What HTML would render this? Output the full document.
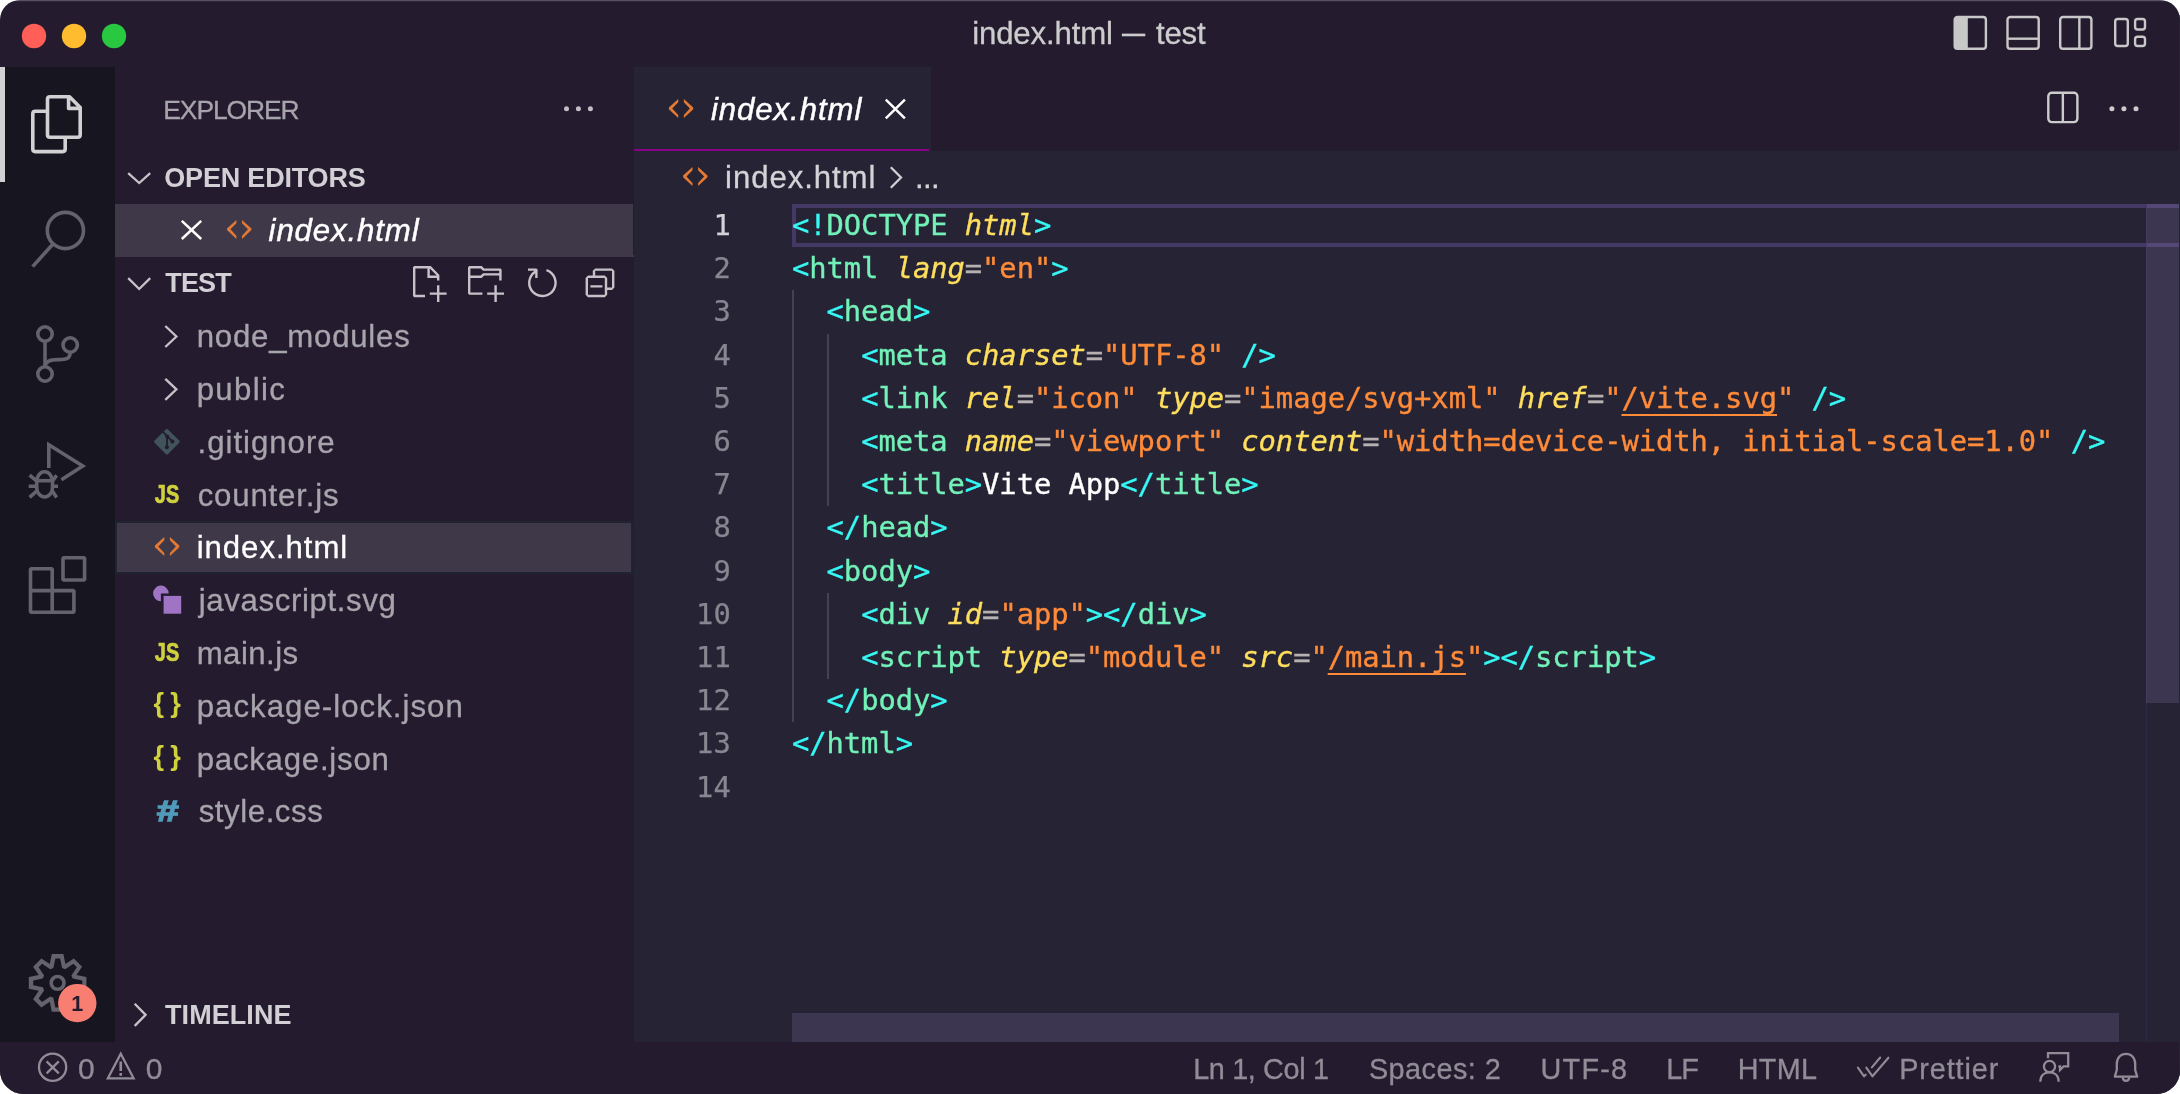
<!DOCTYPE html>
<html lang="en"><head><meta charset="utf-8"><title>index.html — test</title>
<style>
html,body{margin:0;padding:0;background:#ffffff;}
body{width:2180px;height:1094px;overflow:hidden;position:relative;}
.win{position:absolute;left:0;top:0;width:2180px;height:1094px;border-radius:20px 20px 23.5px 23.5px;overflow:hidden;background:#241b2f;}
.win div{position:absolute;}
.t{white-space:pre;-webkit-text-stroke:0.3px;}
.txt{position:absolute;left:0;top:0;width:2180px;height:1094px;will-change:transform;}
.cl{left:792.0px;font:400 28.8px "DejaVu Sans Mono", "Liberation Mono", monospace;line-height:43.2px;height:43.2px;white-space:pre;letter-spacing:-0.059px;-webkit-text-stroke:0.35px;}
.ln{left:641.3px;width:89.5px;text-align:right;font:400 28.8px "DejaVu Sans Mono", "Liberation Mono", monospace;line-height:43.2px;height:43.2px;-webkit-text-stroke:0.25px;}
.ov{position:absolute;left:0;top:0;}
</style></head>
<body><div class="win">
<div style="left:0px;top:67px;width:115px;height:975px;background:#171520;"></div>
<div style="left:0px;top:67px;width:5px;height:115px;background:#d1d0d2;"></div>
<div style="left:634px;top:67px;width:1546px;height:84px;background:#241b2f;"></div>
<div style="left:634px;top:67px;width:297px;height:84px;background:#262335;"></div>
<div style="left:634px;top:148.6px;width:295px;height:2.4px;background:#880088;"></div>
<div style="left:634px;top:151px;width:1546px;height:891px;background:#262335;"></div>
<div style="left:115px;top:204px;width:518px;height:52.8px;background:#3f3849;"></div>
<div style="left:115px;top:255px;width:518.6px;height:2px;background:#403848;"></div>
<div style="left:115px;top:521px;width:518px;height:53px;background:#202432;"></div>
<div style="left:117px;top:523px;width:514px;height:49px;background:#3f3849;"></div>
<div style="left:792px;top:204px;width:1388px;height:43.2px;background:transparent;box-sizing:border-box;border:4.4px solid #443964;border-right:none;"></div>
<div style="left:792px;top:290.4px;width:2.2px;height:432.0px;background:#444251;"></div>
<div style="left:826.6px;top:333.6px;width:2.2px;height:172.8px;background:#444251;"></div>
<div style="left:826.6px;top:592.8px;width:2.2px;height:86.4px;background:#444251;"></div>
<div style="left:2146px;top:204px;width:1px;height:838px;background:#302848;"></div>
<div style="left:2146px;top:204px;width:34px;height:499px;background:rgba(157,139,202,0.188);"></div>
<div style="left:792px;top:1013px;width:1326.6px;height:28.8px;background:rgba(157,139,202,0.188);"></div>
<div style="left:0px;top:1042px;width:2180px;height:52px;background:#241b2f;"></div>
<div style="left:0px;top:0px;width:2180px;height:1px;background:rgba(255,255,255,0.24);"></div>
<div style="left:0px;top:1px;width:2180px;height:1px;background:rgba(255,255,255,0.05);"></div>
<div style="left:2179px;top:0px;width:1px;height:1094px;background:#262335;"></div>
<div class="txt">
<div class="cl" style="top:204.00px"><span style="color:#36f9f6;">&lt;!</span><span style="color:#72f1b8;">DOCTYPE</span><span style="color:#ffffff;"> </span><span style="color:#fede5d;font-style:italic;">html</span><span style="color:#36f9f6;">&gt;</span></div>
<div class="ln" style="top:204.00px;color:#d3d2d6">1</div>
<div class="cl" style="top:247.20px"><span style="color:#36f9f6;">&lt;</span><span style="color:#72f1b8;">html</span><span style="color:#ffffff;"> </span><span style="color:#fede5d;font-style:italic;">lang</span><span style="color:#b6b1b1;">=</span><span style="color:#ff8b39;">"en"</span><span style="color:#36f9f6;">&gt;</span></div>
<div class="ln" style="top:247.20px;color:#888690">2</div>
<div class="cl" style="top:290.40px"><span style="color:#ffffff;">  </span><span style="color:#36f9f6;">&lt;</span><span style="color:#72f1b8;">head</span><span style="color:#36f9f6;">&gt;</span></div>
<div class="ln" style="top:290.40px;color:#888690">3</div>
<div class="cl" style="top:333.60px"><span style="color:#ffffff;">    </span><span style="color:#36f9f6;">&lt;</span><span style="color:#72f1b8;">meta</span><span style="color:#ffffff;"> </span><span style="color:#fede5d;font-style:italic;">charset</span><span style="color:#b6b1b1;">=</span><span style="color:#ff8b39;">"UTF-8"</span><span style="color:#ffffff;"> </span><span style="color:#36f9f6;">/&gt;</span></div>
<div class="ln" style="top:333.60px;color:#888690">4</div>
<div class="cl" style="top:376.80px"><span style="color:#ffffff;">    </span><span style="color:#36f9f6;">&lt;</span><span style="color:#72f1b8;">link</span><span style="color:#ffffff;"> </span><span style="color:#fede5d;font-style:italic;">rel</span><span style="color:#b6b1b1;">=</span><span style="color:#ff8b39;">"icon"</span><span style="color:#ffffff;"> </span><span style="color:#fede5d;font-style:italic;">type</span><span style="color:#b6b1b1;">=</span><span style="color:#ff8b39;">"image/svg+xml"</span><span style="color:#ffffff;"> </span><span style="color:#fede5d;font-style:italic;">href</span><span style="color:#b6b1b1;">=</span><span style="color:#ff8b39;">"</span><span style="color:#ff8b39;text-decoration:underline;text-underline-offset:6.4px;text-decoration-thickness:2px;text-decoration-skip-ink:none;">/vite.svg</span><span style="color:#ff8b39;">"</span><span style="color:#ffffff;"> </span><span style="color:#36f9f6;">/&gt;</span></div>
<div class="ln" style="top:376.80px;color:#888690">5</div>
<div class="cl" style="top:420.00px"><span style="color:#ffffff;">    </span><span style="color:#36f9f6;">&lt;</span><span style="color:#72f1b8;">meta</span><span style="color:#ffffff;"> </span><span style="color:#fede5d;font-style:italic;">name</span><span style="color:#b6b1b1;">=</span><span style="color:#ff8b39;">"viewport"</span><span style="color:#ffffff;"> </span><span style="color:#fede5d;font-style:italic;">content</span><span style="color:#b6b1b1;">=</span><span style="color:#ff8b39;">"width=device-width, initial-scale=1.0"</span><span style="color:#ffffff;"> </span><span style="color:#36f9f6;">/&gt;</span></div>
<div class="ln" style="top:420.00px;color:#888690">6</div>
<div class="cl" style="top:463.20px"><span style="color:#ffffff;">    </span><span style="color:#36f9f6;">&lt;</span><span style="color:#72f1b8;">title</span><span style="color:#36f9f6;">&gt;</span><span style="color:#ffffff;">Vite App</span><span style="color:#36f9f6;">&lt;/</span><span style="color:#72f1b8;">title</span><span style="color:#36f9f6;">&gt;</span></div>
<div class="ln" style="top:463.20px;color:#888690">7</div>
<div class="cl" style="top:506.40px"><span style="color:#ffffff;">  </span><span style="color:#36f9f6;">&lt;/</span><span style="color:#72f1b8;">head</span><span style="color:#36f9f6;">&gt;</span></div>
<div class="ln" style="top:506.40px;color:#888690">8</div>
<div class="cl" style="top:549.60px"><span style="color:#ffffff;">  </span><span style="color:#36f9f6;">&lt;</span><span style="color:#72f1b8;">body</span><span style="color:#36f9f6;">&gt;</span></div>
<div class="ln" style="top:549.60px;color:#888690">9</div>
<div class="cl" style="top:592.80px"><span style="color:#ffffff;">    </span><span style="color:#36f9f6;">&lt;</span><span style="color:#72f1b8;">div</span><span style="color:#ffffff;"> </span><span style="color:#fede5d;font-style:italic;">id</span><span style="color:#b6b1b1;">=</span><span style="color:#ff8b39;">"app"</span><span style="color:#36f9f6;">&gt;&lt;/</span><span style="color:#72f1b8;">div</span><span style="color:#36f9f6;">&gt;</span></div>
<div class="ln" style="top:592.80px;color:#888690">10</div>
<div class="cl" style="top:636.00px"><span style="color:#ffffff;">    </span><span style="color:#36f9f6;">&lt;</span><span style="color:#72f1b8;">script</span><span style="color:#ffffff;"> </span><span style="color:#fede5d;font-style:italic;">type</span><span style="color:#b6b1b1;">=</span><span style="color:#ff8b39;">"module"</span><span style="color:#ffffff;"> </span><span style="color:#fede5d;font-style:italic;">src</span><span style="color:#b6b1b1;">=</span><span style="color:#ff8b39;">"</span><span style="color:#ff8b39;text-decoration:underline;text-underline-offset:6.4px;text-decoration-thickness:2px;text-decoration-skip-ink:none;">/main.js</span><span style="color:#ff8b39;">"</span><span style="color:#36f9f6;">&gt;&lt;/</span><span style="color:#72f1b8;">script</span><span style="color:#36f9f6;">&gt;</span></div>
<div class="ln" style="top:636.00px;color:#888690">11</div>
<div class="cl" style="top:679.20px"><span style="color:#ffffff;">  </span><span style="color:#36f9f6;">&lt;/</span><span style="color:#72f1b8;">body</span><span style="color:#36f9f6;">&gt;</span></div>
<div class="ln" style="top:679.20px;color:#888690">12</div>
<div class="cl" style="top:722.40px"><span style="color:#36f9f6;">&lt;/</span><span style="color:#72f1b8;">html</span><span style="color:#36f9f6;">&gt;</span></div>
<div class="ln" style="top:722.40px;color:#888690">13</div>
<div class="cl" style="top:765.60px"></div>
<div class="ln" style="top:765.60px;color:#888690">14</div>
<div class="t" style='left:163.30px;top:91px;font:400 26.4px "Liberation Sans", sans-serif;line-height:38px;color:#a7a4ac;letter-spacing:-1.053px;'>EXPLORER</div>
<div class="t" style='left:164.30px;top:159px;font:700 27.0px "Liberation Sans", sans-serif;line-height:38px;color:#d2d0d5;letter-spacing:-0.194px;-webkit-text-stroke:0;'>OPEN EDITORS</div>
<div class="t" style='left:268.60px;top:209px;font:italic 400 31.2px "Liberation Sans", sans-serif;line-height:43px;color:#ffffff;letter-spacing:0.876px;-webkit-text-stroke:0.45px;'>index.html</div>
<div class="t" style='left:165.30px;top:264px;font:700 27.0px "Liberation Sans", sans-serif;line-height:38px;color:#d2d0d5;letter-spacing:-0.870px;-webkit-text-stroke:0;'>TEST</div>
<div class="t" style='left:196.70px;top:315px;font:400 31.2px "Liberation Sans", sans-serif;line-height:43px;color:#a7a4ac;letter-spacing:0.772px;'>node_modules</div>
<div class="t" style='left:196.70px;top:368px;font:400 31.2px "Liberation Sans", sans-serif;line-height:43px;color:#a7a4ac;letter-spacing:1.341px;'>public</div>
<div class="t" style='left:197.50px;top:421px;font:400 31.2px "Liberation Sans", sans-serif;line-height:43px;color:#a7a4ac;letter-spacing:0.983px;'>.gitignore</div>
<div class="t" style='left:197.70px;top:474px;font:400 31.2px "Liberation Sans", sans-serif;line-height:43px;color:#a7a4ac;letter-spacing:0.811px;'>counter.js</div>
<div class="t" style='left:196.70px;top:526px;font:400 31.2px "Liberation Sans", sans-serif;line-height:43px;color:#ffffff;letter-spacing:0.932px;'>index.html</div>
<div class="t" style='left:198.80px;top:579px;font:400 31.2px "Liberation Sans", sans-serif;line-height:43px;color:#a7a4ac;letter-spacing:0.617px;'>javascript.svg</div>
<div class="t" style='left:196.70px;top:632px;font:400 31.2px "Liberation Sans", sans-serif;line-height:43px;color:#a7a4ac;letter-spacing:0.435px;'>main.js</div>
<div class="t" style='left:196.70px;top:685px;font:400 31.2px "Liberation Sans", sans-serif;line-height:43px;color:#a7a4ac;letter-spacing:1.025px;'>package-lock.json</div>
<div class="t" style='left:196.70px;top:738px;font:400 31.2px "Liberation Sans", sans-serif;line-height:43px;color:#a7a4ac;letter-spacing:0.760px;'>package.json</div>
<div class="t" style='left:198.70px;top:790px;font:400 31.2px "Liberation Sans", sans-serif;line-height:43px;color:#a7a4ac;letter-spacing:0.565px;'>style.css</div>
<div class="t" style='left:165.00px;top:996px;font:700 27.0px "Liberation Sans", sans-serif;line-height:38px;color:#d2d0d5;letter-spacing:0.073px;-webkit-text-stroke:0;'>TIMELINE</div>
<div class="t" style='left:972.20px;top:12px;font:400 31.2px "Liberation Sans", sans-serif;line-height:43px;color:#cccccc;letter-spacing:-0.157px;'>index.html</div>
<div class="t" style='left:1122.00px;top:11px;font:400 31.2px "Liberation Sans", sans-serif;line-height:43px;color:#cccccc;transform:scaleX(0.74);transform-origin:0 50%;'>—</div>
<div class="t" style='left:1155.90px;top:12px;font:400 31.2px "Liberation Sans", sans-serif;line-height:43px;color:#cccccc;letter-spacing:-0.168px;'>test</div>
<div class="t" style='left:710.90px;top:88px;font:italic 400 31.2px "Liberation Sans", sans-serif;line-height:43px;color:#ffffff;letter-spacing:0.921px;-webkit-text-stroke:0.45px;'>index.html</div>
<div class="t" style='left:725.10px;top:156px;font:400 31.2px "Liberation Sans", sans-serif;line-height:43px;color:#d4d3d7;letter-spacing:0.910px;'>index.html</div>
<div class="t" style='left:915.10px;top:156px;font:400 31.2px "Liberation Sans", sans-serif;line-height:43px;color:#d4d3d7;letter-spacing:-0.715px;'>...</div>
<div class="t" style='left:77.90px;top:1048px;font:400 30.0px "Liberation Sans", sans-serif;line-height:41px;color:#918d97;'>0</div>
<div class="t" style='left:145.80px;top:1048px;font:400 30.0px "Liberation Sans", sans-serif;line-height:41px;color:#918d97;'>0</div>
<div class="t" style='left:1193.20px;top:1049px;font:400 28.8px "Liberation Sans", sans-serif;line-height:40px;color:#918d97;letter-spacing:-0.356px;'>Ln 1, Col 1</div>
<div class="t" style='left:1368.90px;top:1049px;font:400 28.8px "Liberation Sans", sans-serif;line-height:40px;color:#918d97;letter-spacing:0.481px;'>Spaces: 2</div>
<div class="t" style='left:1540.60px;top:1049px;font:400 28.8px "Liberation Sans", sans-serif;line-height:40px;color:#918d97;letter-spacing:1.233px;'>UTF-8</div>
<div class="t" style='left:1666.30px;top:1049px;font:400 28.8px "Liberation Sans", sans-serif;line-height:40px;color:#918d97;letter-spacing:-1.115px;'>LF</div>
<div class="t" style='left:1737.70px;top:1049px;font:400 28.8px "Liberation Sans", sans-serif;line-height:40px;color:#918d97;letter-spacing:0.342px;'>HTML</div>
<div class="t" style='left:1899.20px;top:1049px;font:400 28.8px "Liberation Sans", sans-serif;line-height:40px;color:#918d97;letter-spacing:0.896px;'>Prettier</div>
</div>
<svg class="ov" width="2180" height="1094" viewBox="0 0 2180 1094"><g fill="none" stroke="#d1d0d2" stroke-width="3.6" stroke-linejoin="round"><path d="M50 96.8H69.5L80.2 107.5V134.7Q80.2 137.2 77.7 137.2H50Q47.5 137.2 47.5 134.7V99.3Q47.5 96.8 50 96.8Z"/><path d="M68.6 97V108.4H80"/><path d="M47.5 111.3H35.3Q32.8 111.3 32.8 113.8V149.1Q32.8 151.6 35.3 151.6H62.7Q65.2 151.6 65.2 149.1V137.2"/></g>
<g fill="none" stroke="#64626c" stroke-width="3.6"><circle cx="65.4" cy="230.5" r="18.1"/><path d="M53 244L32.6 266.6"/></g>
<g fill="none" stroke="#64626c" stroke-width="3.6"><circle cx="45" cy="334" r="7.2"/><circle cx="70.2" cy="345" r="7.2"/><circle cx="45" cy="374" r="7.2"/><path d="M45 341.2V366.8"/><path d="M70.2 352.2C70.2 360 64 359.6 58 359.6C50 359.6 45 361 45 366.8"/></g>
<g fill="none" stroke="#64626c" stroke-width="3.6" stroke-linejoin="miter"><path d="M48.8 468V444.8L82.8 466L61.4 479.8"/><rect x="36.7" y="471.8" width="15.8" height="25.2" rx="7.9" ry="9.6"/><path d="M36.7 480.7H52.5"/><path d="M28.7 486.2H36.7M52.5 486.2H58M29.6 475.2L36.2 480.6M56.6 475.2L53 480.6M29.6 497.4L37.2 490.6M56.6 497.4L52 490.6"/></g>
<g fill="none" stroke="#64626c" stroke-width="3.6" stroke-linejoin="bevel"><path d="M30.5 568.8H52.2V590.6H73.9V612.2H30.5Z"/><path d="M30.5 590.6H52.2V612.2"/><rect x="63" y="557.8" width="21.6" height="22.2"/></g>
<g transform="translate(28.8 954.1) scale(2.4)" fill="#64626c"><path fill-rule="evenodd" d="M19.85 8.75l4.15.83v4.84l-4.15.83 2.35 3.52-3.43 3.43-3.52-2.35-.83 4.15H9.58l-.83-4.15-3.52 2.35-3.43-3.43 2.35-3.52L0 14.42V9.58l4.15-.83L1.8 5.23 5.23 1.8l3.52 2.35L9.58 0h4.84l.83 4.15 3.52-2.35 3.43 3.43-2.35 3.52zm-1.57 5.07l4-.81v-2l-4-.81-.54-1.3 2.29-3.43-1.43-1.43-3.43 2.29-1.3-.54-.81-4h-2l-.81 4-1.3.54-3.43-2.29-1.43 1.43L6.38 8.9l-.54 1.3-4 .81v2l4 .81.54 1.3-2.29 3.43 1.43 1.43 3.43-2.29 1.3.54.81 4h2l.81-4 1.3-.54 3.43 2.29 1.43-1.43-2.29-3.43.54-1.3z"/></g>
<circle cx="57.6" cy="982.9" r="6.4" fill="none" stroke="#64626c" stroke-width="3.6"/>
<circle cx="77.3" cy="1003.1" r="19.2" fill="#f97e72"/>
<text x="71.2" y="1010.8" font-family='"Liberation Sans", sans-serif' font-size="21.6" font-weight="700" fill="#241b2f">1</text>
<circle cx="34" cy="36" r="12.2" fill="#ff5f57"/><circle cx="74" cy="36" r="12.2" fill="#febc2e"/><circle cx="114" cy="36" r="12.2" fill="#28c840"/>
<path d="M128.20000000000002 173.20000000000002L139.2 183L150.2 173.20000000000002" fill="none" stroke="#c5c3c8" stroke-width="2.3"/>
<path d="M128.20000000000002 278.1L139.2 289L150.2 278.1" fill="none" stroke="#c5c3c8" stroke-width="2.3"/>
<path d="M165.3 326.0L176.4 336.5L165.3 347.0" fill="none" stroke="#c5c3c8" stroke-width="2.3"/>
<path d="M165.3 378.8L176.4 389.3L165.3 399.8" fill="none" stroke="#c5c3c8" stroke-width="2.3"/>
<path d="M134.70000000000002 1003.8L145.6 1014.85L134.70000000000002 1025.9" fill="none" stroke="#c5c3c8" stroke-width="2.3"/>
<path d="M890.8 167.3L901 177.5L890.8 187.7" fill="none" stroke="#cfced3" stroke-width="2.3"/>
<path d="M181.8 220.8L201.2 239.0M201.2 220.8L181.8 239.0" stroke="#ffffff" stroke-width="2.5" fill="none"/>
<path d="M885.8 99.6L904.9000000000001 118.3M904.9000000000001 99.6L885.8 118.3" stroke="#ffffff" stroke-width="2.5" fill="none"/>
<g transform="translate(167.1 546.6)" fill="#e37933"><path d="M-2.8 -9.5L-12.2 -1L-12.2 0.6L-2.8 9.5V6.3L-8.8 -0.2L-2.8 -6.3Z"/><path d="M2.8 -9.5L12.2 -1L12.2 0.6L2.8 9.5V6.3L8.8 -0.2L2.8 -6.3Z"/></g>
<g transform="translate(239.2 229.5)" fill="#e37933"><path d="M-2.8 -9.5L-12.2 -1L-12.2 0.6L-2.8 9.5V6.3L-8.8 -0.2L-2.8 -6.3Z"/><path d="M2.8 -9.5L12.2 -1L12.2 0.6L2.8 9.5V6.3L8.8 -0.2L2.8 -6.3Z"/></g>
<g transform="translate(681.05 108.6)" fill="#e37933"><path d="M-2.8 -9.5L-12.2 -1L-12.2 0.6L-2.8 9.5V6.3L-8.8 -0.2L-2.8 -6.3Z"/><path d="M2.8 -9.5L12.2 -1L12.2 0.6L2.8 9.5V6.3L8.8 -0.2L2.8 -6.3Z"/></g>
<g transform="translate(695.3 176.6)" fill="#e37933"><path d="M-2.8 -9.5L-12.2 -1L-12.2 0.6L-2.8 9.5V6.3L-8.8 -0.2L-2.8 -6.3Z"/><path d="M2.8 -9.5L12.2 -1L12.2 0.6L2.8 9.5V6.3L8.8 -0.2L2.8 -6.3Z"/></g>
<circle cx="566.5" cy="108.8" r="2.5" fill="#c1bfc6"/>
<circle cx="578.4" cy="108.8" r="2.5" fill="#c1bfc6"/>
<circle cx="590.4" cy="108.8" r="2.5" fill="#c1bfc6"/>
<circle cx="2111.9" cy="108.7" r="2.5" fill="#cccccc"/>
<circle cx="2123.9" cy="108.7" r="2.5" fill="#cccccc"/>
<circle cx="2136" cy="108.7" r="2.5" fill="#cccccc"/>
<g fill="none" stroke="#cccccc" stroke-width="2.4"><rect x="2048.3" y="92.8" width="29.1" height="29.3" rx="3.5"/><path d="M2062.85 92.8V122.1"/></g>
<g fill="none" stroke="#c8c8c8" stroke-width="2.4"><rect x="1954.7" y="17" width="31.2" height="31.7" rx="2.8"/><path d="M1955 17.5h12.8v30.7h-12.8z" fill="#c8c8c8" stroke="none"/><rect x="2007.5" y="17" width="31.2" height="31.7" rx="2.8"/><path d="M2007.5 38.7H2038.7"/><rect x="2060.2" y="17" width="31.2" height="31.7" rx="2.8"/><path d="M2079.35 17V48.7"/><rect x="2115.2" y="19" width="12.6" height="27" rx="2.5"/><rect x="2135.1" y="19" width="9.9" height="10.5" rx="2.5"/><rect x="2135.1" y="36.8" width="9.9" height="9.2" rx="2.5"/></g>
<path transform="translate(408.2 263.6) scale(2.4)" fill="#c5c3c8" fill-rule="evenodd" d="M9.5 1.1l3.4 3.5.1.4v2h-1V6H8V2H3v11h4v1H2.5l-.5-.5v-12l.5-.5h6.7l.3.1zM9 2v3h2.9L9 2zm4 14h-1v-3H9v-1h3V9h1v3h3v1h-3v3z"/>
<path transform="translate(465.6 263.6) scale(2.4)" fill="#c5c3c8" fill-rule="evenodd" d="M14.5 2H7.71l-.85-.85L6.51 1h-5l-.5.5v11l.5.5H7v-1H1.99V6h4.49l.35-.15.86-.86H14v1.5l-.001.51h1.011V2.5L14.5 2zm-.51 2h-6.5l-.35.15-.86.86H2v-3h4.29l.85.85.36.15H14l-.01.99zM13 16h-1v-3H9v-1h3V9h1v3h3v1h-3v3z"/>
<path transform="translate(523.2 263.6) scale(2.4)" fill="#c5c3c8" fill-rule="evenodd" d="M4.681 3H2V2h3.5l.5.5V6H5V4a5 5 0 1 0 4.53-.761l.302-.954A6 6 0 1 1 4.681 3z"/>
<path transform="translate(580.8 263.6) scale(2.4)" fill="#c5c3c8" fill-rule="evenodd" d="M9 9H4v1h5V9zM5 3l1-1h7l1 1v7l-1 1h-2v2l-1 1H3l-1-1V6l1-1h2V3zm1 2h4l1 1v4h2V3H6v2zm4 1H3v7h7V6z"/>
<g><rect x="-9.5" y="-9.5" width="19" height="19" rx="1.6" transform="translate(166.9 441.7) rotate(45)" fill="#41535b"/><g stroke="#241b2f" stroke-width="1.8" fill="none"><path d="M162.7 431.7L167.2 436.4L172.4 441.4M167.2 436.4L166.9 447.2"/></g><g fill="#241b2f"><circle cx="167.2" cy="436.4" r="2"/><circle cx="172.4" cy="441.4" r="2"/><circle cx="166.9" cy="447.2" r="2"/></g></g>
<g fill="#a074c4"><path d="M160.9 593.4V601.2A7.8 7.8 0 1 1 168.7 593.4Z"/><rect x="163.6" y="595.9" width="17.6" height="17.8"/></g>
<text stroke="#cfd13d" stroke-width="0.7" x="154.8" y="503" font-family='"Liberation Sans", sans-serif' font-size="25.7" font-weight="700" fill="#cfd13d" textLength="24.4" lengthAdjust="spacingAndGlyphs">JS</text>
<text stroke="#cfd13d" stroke-width="0.7" x="154.8" y="661.4" font-family='"Liberation Sans", sans-serif' font-size="25.7" font-weight="700" fill="#cfd13d" textLength="24.4" lengthAdjust="spacingAndGlyphs">JS</text>
<text stroke="#cfd13d" stroke-width="0" x="153.6" y="712.2" font-family='"Liberation Sans", sans-serif' font-size="28.4" font-weight="700" fill="#cfd13d" textLength="10.6" lengthAdjust="spacingAndGlyphs">{</text>
<text stroke="#cfd13d" stroke-width="0" x="170.2" y="712.2" font-family='"Liberation Sans", sans-serif' font-size="28.4" font-weight="700" fill="#cfd13d" textLength="10.6" lengthAdjust="spacingAndGlyphs">}</text>
<text stroke="#cfd13d" stroke-width="0" x="153.6" y="765" font-family='"Liberation Sans", sans-serif' font-size="28.4" font-weight="700" fill="#cfd13d" textLength="10.6" lengthAdjust="spacingAndGlyphs">{</text>
<text stroke="#cfd13d" stroke-width="0" x="170.2" y="765" font-family='"Liberation Sans", sans-serif' font-size="28.4" font-weight="700" fill="#cfd13d" textLength="10.6" lengthAdjust="spacingAndGlyphs">}</text>
<text stroke="#519aba" stroke-width="1.3" x="156.2" y="821.2" font-family='"Liberation Sans", sans-serif' font-size="29.5" font-weight="700" font-style="italic" fill="#519aba" textLength="22" lengthAdjust="spacingAndGlyphs">#</text>
<g fill="none" stroke="#918d97" stroke-width="2.3"><circle cx="52.6" cy="1067.2" r="13.6"/><path d="M46.6 1061.4L58.8 1073.4M58.8 1061.4L46.6 1073.4"/><path d="M120.75 1053.8L133.6 1078.3H107.9Z" stroke-linejoin="miter"/><path d="M120.75 1061.5V1071" stroke-width="2.6"/><path d="M120.75 1073V1075.8" stroke-width="2.6"/></g>
<g fill="none" stroke="#918d97" stroke-width="2.1" stroke-linecap="round" stroke-linejoin="round"><path d="M1857.9 1067.7L1864.1 1076.3L1865.7 1074.7M1866.3 1067.7L1872.5 1076.3L1888.4 1057.7M1871.9 1067.4L1880.2 1057.5"/></g>
<g fill="none" stroke="#918d97" stroke-width="2.3"><circle cx="2049.5" cy="1066.5" r="5.6"/><path d="M2040.3 1081.8C2040.3 1076 2044 1072.3 2049.5 1072.3C2055 1072.3 2058.7 1076 2058.7 1081.8"/><path d="M2048 1058.2V1053.2H2068.2V1066.4H2063.6L2060 1070V1066.4H2058.4"/></g>
<g fill="none" stroke="#918d97" stroke-width="2.3"><path d="M2114.8 1076.7H2137.2L2135.2 1070V1064C2135.2 1057.8 2131.2 1053.8 2126 1053.8C2120.8 1053.8 2116.8 1057.8 2116.8 1064V1070Z" stroke-linejoin="round"/><path d="M2122.8 1077.2C2122.8 1079.4 2124.2 1080.8 2126 1080.8C2127.8 1080.8 2129.2 1079.4 2129.2 1077.2"/></g></svg>
</div></body></html>
